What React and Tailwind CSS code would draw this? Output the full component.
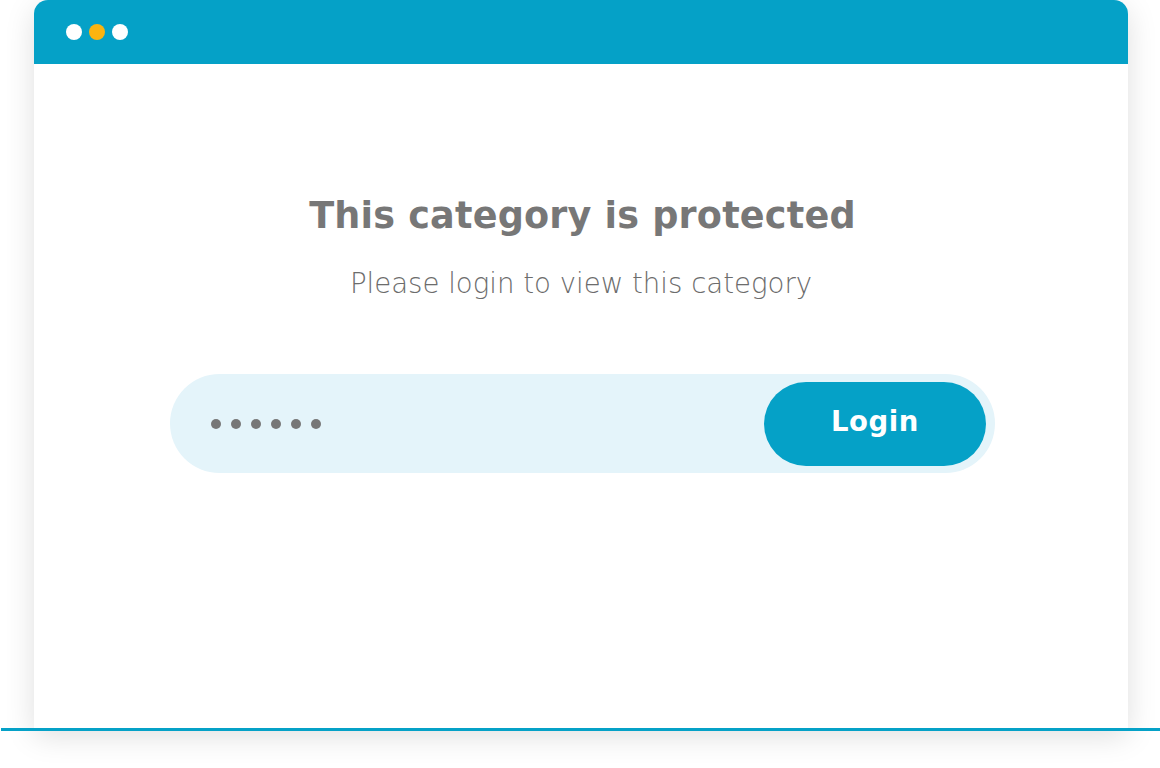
import React from 'react';

const Dot = ({ color }) => <span className={`block h-4 w-4 rounded-full ${color}`} />;

export default function App() {
  return (
    <div className="w-[1160px] h-[768px] bg-white overflow-hidden" style={{ fontFamily: '"DejaVu Sans", "Open Sans", sans-serif' }}>
      {/* Browser window */}
      <div className="relative ml-[34px] w-[1094px] h-[728px] rounded-t-[14px] bg-white shadow-[0_8px_30px_rgba(0,0,0,0.13)] flex flex-col">
        <div className="h-[64px] rounded-t-[14px] bg-[#05a1c7] flex items-center gap-[7px] pl-[32px]">
          <Dot color="bg-white" />
          <Dot color="bg-[#fbb40f]" />
          <Dot color="bg-white" />
        </div>

        <div className="flex flex-col items-center pt-[128px]">
          <h1 className="ml-[3px] text-[36.6px] leading-[48px] font-bold text-[#777777] tracking-[0.2px]">
            This category is protected
          </h1>
          <p className="mt-[28px] text-[27.6px] leading-[32px] font-extralight text-[#6c6c6c]">
            Please login to view this category
          </p>

          {/* Password field */}
          <div className="mt-[74px] ml-[3px] w-[825px] h-[99px] rounded-full bg-[#e4f4fa] flex items-center justify-between pl-[41px] pr-[9px]">
            <div className="flex items-center gap-[10px]">
              {[0, 1, 2, 3, 4, 5].map((i) => (
                <span key={i} className="block h-[10px] w-[10px] rounded-full bg-[#777777]" />
              ))}
            </div>
            <button className="h-[84px] w-[222px] rounded-full bg-[#05a1c7] text-white text-[27.5px] leading-[30px] pb-[6px] font-bold tracking-[0.6px]">
              Login
            </button>
          </div>
        </div>
      </div>
      <div className="relative h-[3px] bg-[#05a1c7] ml-[1px]" />
    </div>
  );
}
